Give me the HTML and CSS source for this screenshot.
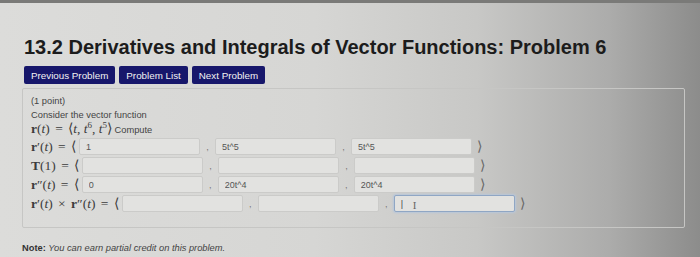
FILE: index.html
```html
<!DOCTYPE html>
<html lang="en">
<head>
    <meta charset="UTF-8">
    <title>13.2 Derivatives and Integrals of Vector Functions: Problem 6</title>
    <link rel="stylesheet" href="styles.css">
</head>
<body>
    <div class="page">
        <h1 class="title">13.2 Derivatives and Integrals of Vector Functions: Problem 6</h1>

        <div class="nav">
            <button class="nav-btn">Previous Problem</button>
            <button class="nav-btn">Problem List</button>
            <button class="nav-btn">Next Problem</button>
        </div>

        <!-- Problem body -->
        <div class="problem">
            <div class="line">(1 point)</div>
            <div class="line">Consider the vector function</div>
            <div class="line">
                <span class="math"><b>r</b>(<i>t</i>) <span class="eq">=</span> ⟨<i>t</i>, <i>t</i><sup>6</sup>, <i>t</i><sup>5</sup>⟩</span> Compute
            </div>

            <div class="row">
                <span class="math"><b>r</b>′(<i>t</i>) <span class="eq">=</span> ⟨</span>
                <input class="answer" type="text" value="1">
                <span class="comma">,</span>
                <input class="answer" type="text" value="5t^5">
                <span class="comma">,</span>
                <input class="answer" type="text" value="5t^5">
                <span class="math close">⟩</span>
            </div>
            <div class="row">
                <span class="math"><b>T</b>(1) <span class="eq">=</span> ⟨</span>
                <input class="answer" type="text" value="">
                <span class="comma">,</span>
                <input class="answer" type="text" value="">
                <span class="comma">,</span>
                <input class="answer" type="text" value="">
                <span class="math close">⟩</span>
            </div>
            <div class="row">
                <span class="math"><b>r</b>″(<i>t</i>) <span class="eq">=</span> ⟨</span>
                <input class="answer" type="text" value="0">
                <span class="comma">,</span>
                <input class="answer" type="text" value="20t^4">
                <span class="comma">,</span>
                <input class="answer" type="text" value="20t^4">
                <span class="math close">⟩</span>
            </div>
            <div class="row">
                <span class="math"><b>r</b>′(<i>t</i>) <span class="eq">×</span> <b>r</b>″(<i>t</i>) <span class="eq">=</span> ⟨</span>
                <input class="answer" type="text" value="">
                <span class="comma">,</span>
                <input class="answer" type="text" value="">
                <span class="comma">,</span>
                <span class="focus-wrap">
                    <input class="answer focused" type="text" value="|">
                    <span class="ibeam">I</span>
                </span>
                <span class="math close">⟩</span>
            </div>
        </div>

        <p class="note"><b>Note:</b> <i>You can earn partial credit on this problem.</i></p>
    </div>
</body>
</html>
```

FILE: styles.css
```css
body {
    margin: 0;
    height: 257px;
    overflow: hidden;
    border-top: 3px solid #7a7a78;
    background: linear-gradient(to right, #dcdcda 0%, #d6d6d4 45%, #c8c8c6 68%, #acacab 87%, #8c8c8b 100%);
    font-family: "Liberation Sans", Arial, sans-serif;
    color: #3a3a3a;
}
.page {
    padding: 0 15px 0 24px;
}
.title {
    margin: 0;
    padding-top: 33px;
    font-size: 20px;
    font-weight: bold;
    color: #1c1c1c;
}
.nav {
    display: flex;
    gap: 4px;
    margin-top: 7px;
}
.nav-btn {
    height: 18px;
    padding: 0 7px;
    border: none;
    border-radius: 2px;
    background-color: #17176b;
    color: #f2f2f2;
    font-family: "Liberation Sans", Arial, sans-serif;
    font-size: 9.8px;
}
.problem {
    margin: 4px 0 0 -2px;
    padding: 5px 8px 14px;
    border: 1px solid #c6c6c4;
    border-radius: 2px;
    font-size: 9.3px;
    color: #444;
}
.line {
    line-height: 14px;
}
.math {
    font-family: "Liberation Serif", "Times New Roman", serif;
    font-size: 13.5px;
    color: #3c3c3c;
    white-space: nowrap;
}
.math .eq {
    margin: 0 2px;
}
.math sup {
    font-size: 9px;
    line-height: 0;
}
.row {
    display: flex;
    align-items: center;
    height: 19px;
}
.row .math {
    margin-right: 3px;
}
.answer {
    box-sizing: border-box;
    width: 121px;
    height: 17px;
    padding: 0 6px;
    border: 1px solid #cbcbc9;
    border-radius: 2px;
    background: #e2e2e0;
    font-family: "Liberation Sans", Arial, sans-serif;
    font-size: 9px;
    color: #555;
}
.answer.focused {
    border: 1px solid #8fa6c4;
    box-shadow: 0 0 2px 1px #b7c6da;
    color: #444;
}
.focus-wrap {
    position: relative;
    display: flex;
}
.ibeam {
    position: absolute;
    left: 19px;
    top: 4px;
    font-family: "Liberation Serif", serif;
    font-size: 11px;
    color: #666;
}
.comma {
    width: 15px;
    text-align: center;
    color: #777;
}
.close {
    margin-left: 5px;
    color: #666;
}
.note {
    margin: 15px 0 0 -2px;
    font-size: 9.3px;
    color: #333;
}
.note i {
    color: #444;
}
```
